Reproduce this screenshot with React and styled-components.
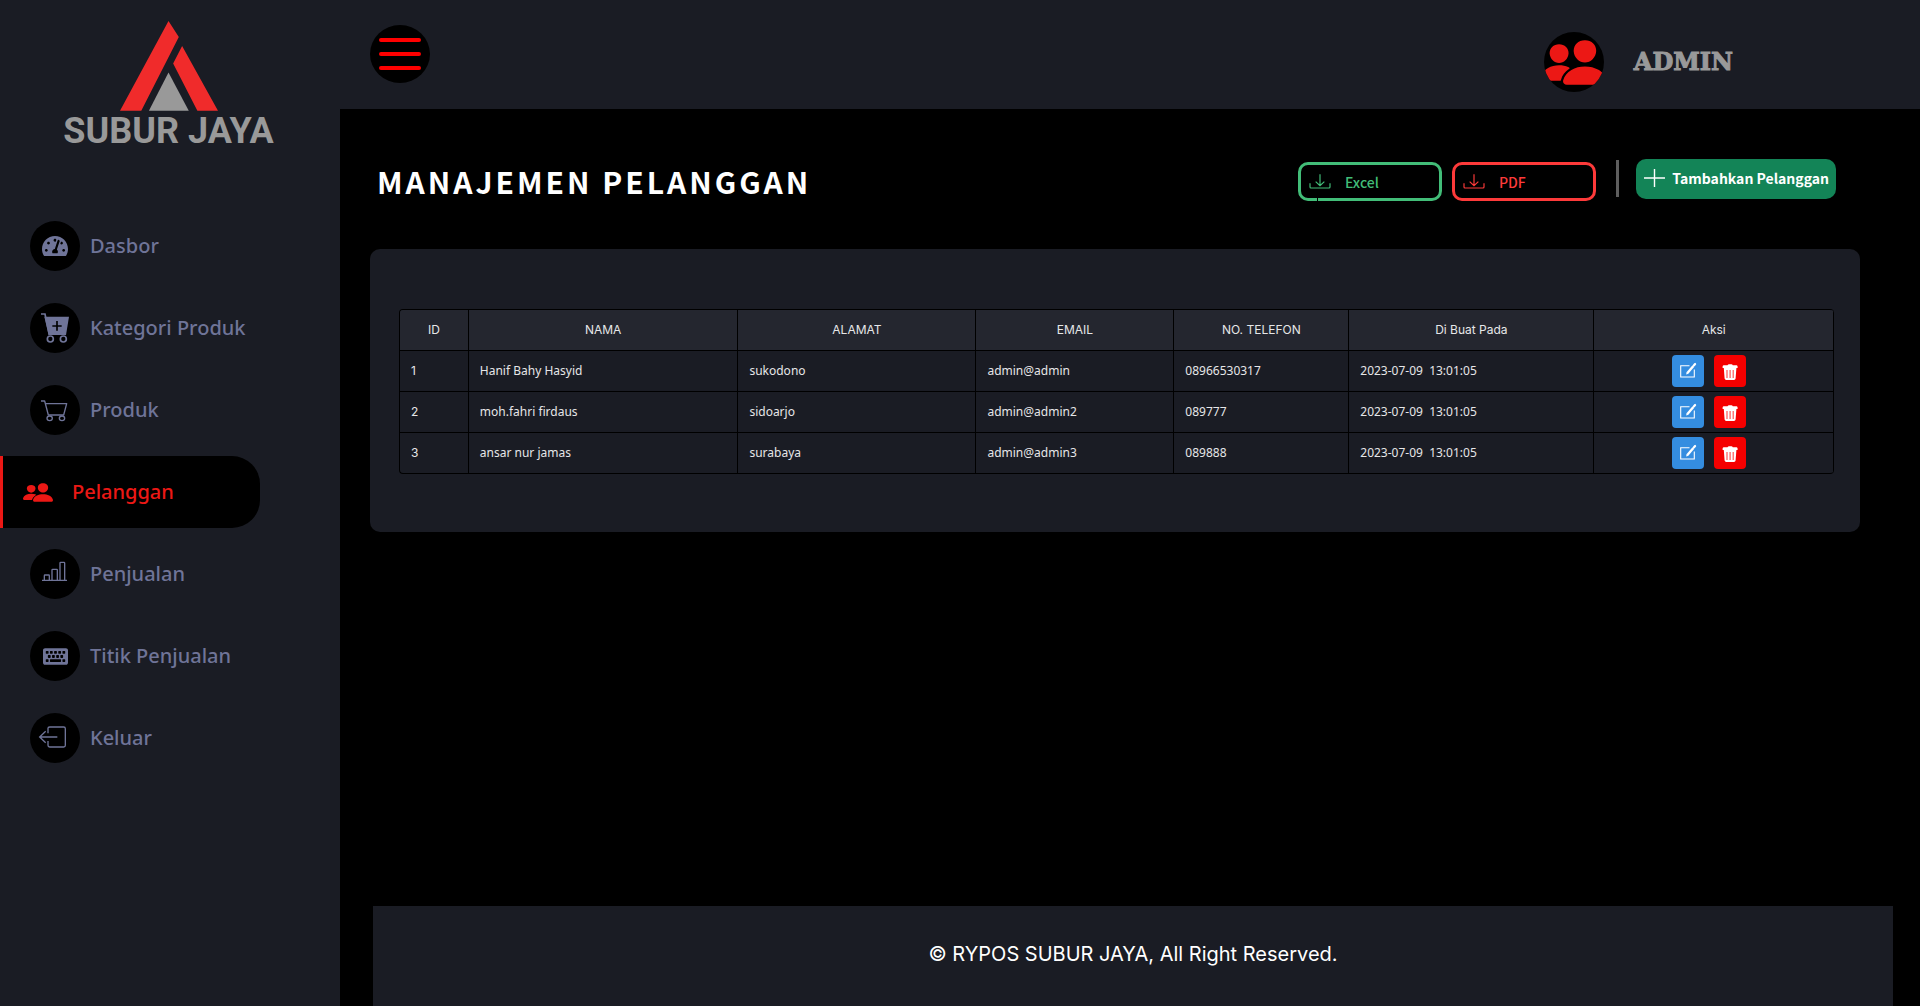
import React from 'react';
import styled, { createGlobalStyle } from 'styled-components';
import { FaTachometerAlt, FaKeyboard } from 'react-icons/fa';
import { IoPeople } from 'react-icons/io5';

const color = {
  panel: '#1a1c24',
  head: '#24262f',
  muted: '#6f7498',
  red: '#ec1815',
  grey: '#999999',
};

const fontBody = `"Noto Sans", "Open Sans", sans-serif`;
const fontUi = `Inter, "Liberation Sans", sans-serif`;
const fontHeading = `"Noto Sans CJK JP", "Noto Sans", sans-serif`;

const GlobalStyle = createGlobalStyle`
  *, *::before, *::after { box-sizing: border-box; }
  body { margin: 0; background: #000; color: #fff; font-family: ${fontBody}; }
  button { font: inherit; cursor: pointer; }
  svg { flex: none; }
`;

const Page = styled.div`
  display: flex;
  min-height: 100vh;
`;

const Sidebar = styled.aside`
  flex: 0 0 340px;
  background: ${color.panel};
`;

const Brand = styled.a`
  display: flex;
  flex-direction: column;
  align-items: center;
  padding: 21px 3px 0 0;
  color: ${color.grey};
  font: 700 36px/40px Roboto, sans-serif;
  text-decoration: none;
`;

const Nav = styled.nav`
  display: flex;
  flex-direction: column;
  gap: 10px;
  padding-top: 59px;
`;

const NavItem = styled.a`
  display: flex;
  align-items: center;
  gap: ${(p) => (p.$active ? 18 : 10)}px;
  width: 260px;
  height: 72px;
  padding-left: ${(p) => (p.$active ? 19 : 30)}px;
  border-left: ${(p) => (p.$active ? `3px solid ${color.red}` : 'none')};
  border-radius: 0 28px 28px 0;
  background: ${(p) => (p.$active ? '#000' : 'transparent')};
  color: ${(p) => (p.$active ? color.red : color.muted)};
  font: 500 20px/28px ${fontBody};
  text-decoration: none;
  white-space: nowrap;
`;

const Disc = styled.span`
  display: flex;
  align-items: center;
  justify-content: center;
  width: 50px;
  height: 50px;
  border-radius: 50%;
  background: #000;
`;

const PeopleIcon = styled(IoPeople).attrs({ preserveAspectRatio: 'none' })`
  width: ${(p) => (p.$large ? 70 : 32)}px;
  height: ${(p) => (p.$large ? 65 : 27)}px;
`;

const Content = styled.div`
  display: flex;
  flex: 1;
  flex-direction: column;
  min-width: 0;
`;

const TopBar = styled.header`
  display: flex;
  align-items: flex-start;
  justify-content: space-between;
  height: 109px;
  padding: 25px 187px 0 30px;
  background: ${color.panel};
`;

const MenuButton = styled.button`
  display: flex;
  align-items: center;
  justify-content: center;
  width: 60px;
  height: 58px;
  padding: 0;
  border: 0;
  border-radius: 50%;
  background: #000;
`;

const User = styled.div`
  display: flex;
  align-items: center;
  gap: 30px;
  padding-top: 7px;
  color: ${color.grey};
  font: 700 24px/28px "DejaVu Serif", serif;
  -webkit-text-stroke: 1px ${color.grey};
`;

const Avatar = styled.span`
  display: flex;
  align-items: center;
  justify-content: center;
  width: 60px;
  height: 60px;
  overflow: hidden;
  border-radius: 50%;
  background: #000;
  color: ${color.red};
`;

const Main = styled.main`
  padding: 50px 60px 40px 30px;
`;

const TitleRow = styled.div`
  display: flex;
  align-items: flex-start;
  justify-content: space-between;
  padding: 0 24px 0 7px;
`;

const Title = styled.h1`
  margin: 0;
  font: 700 30px/44px ${fontHeading};
  letter-spacing: 3px;
`;

const Actions = styled.div`
  display: flex;
  gap: 20px;
`;

const Exports = styled.div`
  display: flex;
  gap: 10px;
  padding-top: 3px;
`;

const ExportButton = styled.button`
  position: relative;
  display: flex;
  align-items: center;
  gap: 14px;
  width: 144px;
  height: 39px;
  padding: 0 8px;
  border: 3px solid ${(p) => p.$tone};
  border-radius: 10px;
  background: #000;
  color: ${(p) => p.$tone};
  font: 500 14px/20px ${fontHeading};

  &::after {
    content: '';
    position: absolute;
    bottom: -3px;
    left: 16px;
    width: 1px;
    height: 3px;
    background: ${(p) => (p.$notch ? '#000' : 'transparent')};
  }
`;

const Divider = styled.span`
  width: 3px;
  height: 37px;
  margin-top: 1px;
  background: #5e5e5e;
`;

const AddButton = styled.button`
  display: flex;
  align-items: center;
  justify-content: space-between;
  width: 200px;
  height: 40px;
  padding: 0 7px 2px 8px;
  border: 0;
  border-radius: 10px;
  margin-left: -3px;
  background: #138457;
  color: #fff;
  font: 700 14px/20px ${fontHeading};
  white-space: nowrap;
`;

const Card = styled.section`
  margin-top: 46px;
  padding: 60px 26px 58px 29px;
  border-radius: 10px;
  background: ${color.panel};
`;

const Table = styled.table`
  width: 100%;
  table-layout: fixed;
  border: 1px solid #000;
  border-right: 0;
  border-radius: 4px;
  border-spacing: 0;
  overflow: hidden;
  color: #e6e6e8;
  font-size: 12px;
  line-height: 18px;
`;

const Col = styled.col`
  width: ${(p) => p.$share}%;
`;

const HeadCell = styled.th`
  height: 41px;
  padding: 0 11px;
  border-right: 1px solid #000;
  border-bottom: 1px solid #000;
  background: ${color.head};
  font-family: ${fontUi};
  font-weight: 400;
`;

const Cell = styled.td`
  height: 41px;
  padding: 0 11px;
  border-right: 1px solid #000;
  border-bottom: 1px solid #000;
  font-family: ${(p) => (p.$ui ? fontUi : fontBody)};
  white-space: pre;

  tr:last-child > & { height: 40px; border-bottom: 0; }
`;

const RowActions = styled.div`
  display: flex;
  gap: 10px;
  justify-content: center;
  padding-right: 10px;
`;

const IconButton = styled.button`
  display: flex;
  width: 32px;
  height: 32px;
  padding: 0;
  border: 0;
  border-radius: 4px;
  background: ${(p) => p.$tone};
`;

const Footer = styled.footer`
  margin: auto 27px 0 33px;
  padding: 34px 20px 38px;
  background: ${color.panel};
  font: 400 20px/28px ${fontUi};
  text-align: center;
`;

const Logo = () => (
  <svg width="98" height="90" viewBox="359 64 295 271" aria-hidden="true">
    <path fill="#f02b2b" d="M505 64 536 112 423 334H359ZM546 139 654 334H592L519 192Z" />
    <path fill="#999" d="M505 219 566 334H446Z" />
  </svg>
);

const CartPlusIcon = () => (
  <svg width="50" height="50" viewBox="90 309 150 150" fill="none" stroke="currentColor" strokeWidth="5">
    <path fill="currentColor" stroke="none" d="M133 350H207L198 405H146Z" />
    <path d="M123 342H135L148 405" />
    <circle cx="151" cy="417" r="9" />
    <circle cx="190" cy="417" r="9" />
    <path stroke="#000" d="M171 363V392M157 378H185" />
  </svg>
);

const CartIcon = () => (
  <svg width="50" height="50" viewBox="90 555 150 150" fill="none" stroke="currentColor" strokeWidth="4">
    <path d="M123 603H134L145 645H191L200 611H137" strokeLinejoin="round" />
    <ellipse cx="149" cy="655" rx="8" ry="7" />
    <ellipse cx="186" cy="655" rx="8" ry="7" />
  </svg>
);

const BarsIcon = () => (
  <svg width="50" height="50" viewBox="90 327 150 150" fill="none" stroke="currentColor" strokeWidth="4">
    <path d="M126 421H201M133 421V407Q133 405 135 405H146Q148 405 148 407V421M156 421V390Q156 388 158 388H170Q172 388 172 390V421M180 421V369Q180 367 182 367H192Q194 367 194 369V421" />
  </svg>
);

const ExitIcon = () => (
  <svg width="50" height="50" viewBox="90 819 150 150" fill="none" stroke="currentColor" strokeWidth="4">
    <path d="M144 880V865Q144 861 149 861H191Q196 861 196 866V916Q196 921 191 921H149Q144 921 144 916V903M172 891H119M137 874 119 891 137 908" />
  </svg>
);

const MenuIcon = () => (
  <svg width="44" height="36" viewBox="0 0 44 36" stroke="#f00" strokeWidth="4" strokeLinecap="round" aria-hidden="true">
    <path d="M3 4H41M3 18H41M3 32H41" />
  </svg>
);

const DownloadIcon = () => (
  <svg width="22" height="16" viewBox="86 100 66 48" fill="none" stroke="currentColor" strokeWidth="3.5" aria-hidden="true">
    <path d="M119 101V134M106 123 119 135 132 123M89 128V139Q89 142 92 142H146Q149 142 149 139V128" />
  </svg>
);

const PlusIcon = () => (
  <svg width="21" height="18" viewBox="0 0 21 18" stroke="currentColor" strokeWidth="1.4" aria-hidden="true">
    <path d="M0 9H21M10.5 0V18" />
  </svg>
);

const EditIcon = () => (
  <svg width="32" height="32" viewBox="0 0 32 32" fill="none" stroke="#fff" aria-hidden="true">
    <path d="M17.5 10.8H8.7V22H22.3V14.5" strokeWidth="1.1" />
    <path d="M15.4 18 21.4 11" strokeWidth="2.4" />
    <path d="M22 10.3 23.1 9" strokeWidth="2.2" strokeLinecap="round" />
    <path fill="#fff" stroke="none" d="M14.6 17 16.5 18.8 14.2 19.6Z" />
  </svg>
);

const TrashIcon = () => (
  <svg width="32" height="32" viewBox="0 0 32 32" aria-hidden="true">
    <path fill="#fff" d="M13.5 10.2Q14 9.2 15 9.2H17.4Q18.4 9.2 18.8 10.2H22.6Q23.6 10.4 23.6 11.6V13H22.4L21.6 23.6Q21.4 25 20 25H12.2Q10.8 25 10.6 23.6L9.8 13H8.6V11.6Q8.6 10.4 9.6 10.2Z" />
    <path stroke="#f55" strokeWidth="1.2" d="M13 15V23M16.1 15V23M19.2 15V23" />
  </svg>
);

const navItems = [
  { label: 'Dasbor', icon: <FaTachometerAlt size={26} /> },
  { label: 'Kategori Produk', icon: <CartPlusIcon /> },
  { label: 'Produk', icon: <CartIcon /> },
  { label: 'Pelanggan', active: true },
  { label: 'Penjualan', icon: <BarsIcon /> },
  { label: 'Titik Penjualan', icon: <FaKeyboard size={25} /> },
  { label: 'Keluar', icon: <ExitIcon /> },
];

const columns = [
  ['ID', 4.8],
  ['NAMA', 18.8],
  ['ALAMAT', 16.6],
  ['EMAIL', 13.8],
  ['NO. TELEFON', 12.2],
  ['Di Buat Pada', 17.1],
  ['Aksi', 16.7],
];

const customers = [
  ['1', 'Hanif Bahy Hasyid', 'sukodono', 'admin@admin', '08966530317', '2023-07-09  13:01:05'],
  ['2', 'moh.fahri firdaus', 'sidoarjo', 'admin@admin2', '089777', '2023-07-09  13:01:05'],
  ['3', 'ansar nur jamas', 'surabaya', 'admin@admin3', '089888', '2023-07-09  13:01:05'],
];

export default function App() {
  return (
    <>
      <GlobalStyle />
      <Page>
        <Sidebar>
          <Brand href="#">
            <Logo />
            SUBUR JAYA
          </Brand>
          <Nav>
            {navItems.map((item) => (
              <NavItem key={item.label} href="#" $active={item.active}>
                {item.active ? <PeopleIcon /> : <Disc>{item.icon}</Disc>}
                {item.label}
              </NavItem>
            ))}
          </Nav>
        </Sidebar>
        <Content>
          <TopBar>
            <MenuButton aria-label="Menu">
              <MenuIcon />
            </MenuButton>
            <User>
              <Avatar>
                <PeopleIcon $large />
              </Avatar>
              ADMIN
            </User>
          </TopBar>
          <Main>
            <TitleRow>
              <Title>MANAJEMEN PELANGGAN</Title>
              <Actions>
                <Exports>
                  <ExportButton $tone="#42bd78" $notch>
                    <DownloadIcon />
                    Excel
                  </ExportButton>
                  <ExportButton $tone="#fd3a3a">
                    <DownloadIcon />
                    PDF
                  </ExportButton>
                </Exports>
                <Divider />
                <AddButton>
                  <PlusIcon />
                  Tambahkan Pelanggan
                </AddButton>
              </Actions>
            </TitleRow>
            <Card>
              <Table>
                <colgroup>
                  {columns.map(([name, share]) => (
                    <Col key={name} $share={share} />
                  ))}
                </colgroup>
                <thead>
                  <tr>
                    {columns.map(([name]) => (
                      <HeadCell key={name} scope="col">{name}</HeadCell>
                    ))}
                  </tr>
                </thead>
                <tbody>
                  {customers.map((row) => (
                    <tr key={row[0]}>
                      {row.map((value, i) => (
                        <Cell key={i} $ui={i === 0}>{value}</Cell>
                      ))}
                      <Cell>
                        <RowActions>
                          <IconButton $tone="#348de0" aria-label="Ubah">
                            <EditIcon />
                          </IconButton>
                          <IconButton $tone="#f50000" aria-label="Hapus">
                            <TrashIcon />
                          </IconButton>
                        </RowActions>
                      </Cell>
                    </tr>
                  ))}
                </tbody>
              </Table>
            </Card>
          </Main>
          <Footer>© RYPOS SUBUR JAYA, All Right Reserved.</Footer>
        </Content>
      </Page>
    </>
  );
}
